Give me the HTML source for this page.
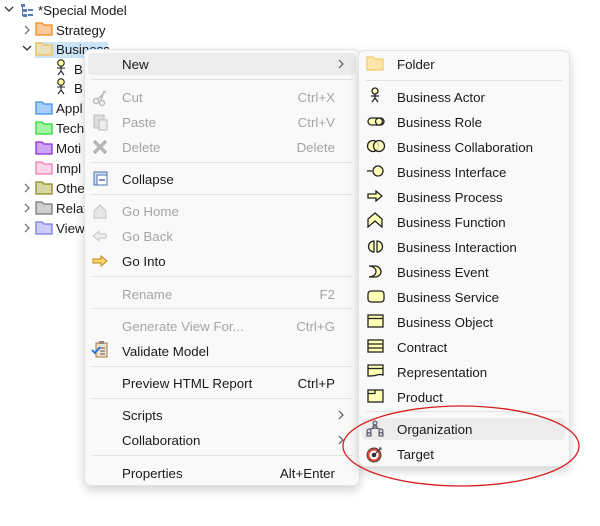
<!DOCTYPE html>
<html><head><meta charset="utf-8"><style>
*{margin:0;padding:0;box-sizing:border-box}
body{width:600px;height:526px;background:#fff;font-family:"Liberation Sans",sans-serif;font-size:13.3px;color:#1a1a1a;position:relative;overflow:hidden}
.a{position:absolute;white-space:nowrap}
.t{line-height:16px;margin-top:1px}
.menu{position:absolute;background:#f9f9f9;border:1px solid #e3e3e3;border-radius:7px;box-shadow:0 4px 10px rgba(0,0,0,0.18)}
.sep{position:absolute;height:1px;background:#e2e2e2}
.dis{color:#a5a5a5}
svg{position:absolute;overflow:visible}
</style></head><body>

<!-- tree -->
<svg style="left:0;top:0" width="120" height="240">
 <g fill="none" stroke="#333" stroke-width="1.3">
  <path d="M5 7l4 4 4-4"/>
  <path d="M25 26l4 4-4 4" stroke="#777"/>
  <path d="M23 46l4 4 4-4"/>
  <path d="M25 184l4 4-4 4" stroke="#777"/>
  <path d="M25 204l4 4-4 4" stroke="#777"/>
  <path d="M25 224l4 4-4 4" stroke="#777"/>
 </g>
 <g fill="#5a7fb5"><rect x="21" y="4" width="4" height="3"/><rect x="23" y="9" width="4" height="3"/><rect x="23" y="14" width="4" height="3"/><rect x="28" y="9" width="5" height="2"/><rect x="28" y="14" width="5" height="2"/><rect x="22" y="6" width="1" height="10"/></g>
</svg>
<div class="a" style="left:35px;top:42px;width:73px;height:16px;background:#cce4f7"></div>
<svg style="left:0;top:0" width="120" height="240">
 <g stroke-width="1.3">
  <path d="M36 23h6l2 2h8v10h-16z" fill="#ffc89a" stroke="#f08a1c"/>
  <path d="M36 43h6l2 2h8v10h-16z" fill="#e8e2b8" stroke="#f0c050"/>
  <path d="M36 102h6l2 2h8v10h-16z" fill="#a8cffa" stroke="#3f8ee0"/>
  <path d="M36 122h6l2 2h8v10h-16z" fill="#a3f5a3" stroke="#2cd42c"/>
  <path d="M36 142h6l2 2h8v10h-16z" fill="#cfa3f5" stroke="#8c2ed8"/>
  <path d="M36 162h6l2 2h8v10h-16z" fill="#ffd3e8" stroke="#f07ab4"/>
  <path d="M36 182h6l2 2h8v10h-16z" fill="#d6d6a0" stroke="#8a8a20"/>
  <path d="M36 202h6l2 2h8v10h-16z" fill="#cfcfcf" stroke="#777"/>
  <path d="M36 222h6l2 2h8v10h-16z" fill="#ccccff" stroke="#7a7ae0"/>
 </g>
 <g stroke="#222" stroke-width="1.1" fill="#ffffa0">
  <circle cx="61" cy="63" r="3.2"/><path d="M61 66v5M57 68h8M61 71l-3 4M61 71l3 4" fill="none"/>
  <circle cx="61" cy="82" r="3.2"/><path d="M61 85v5M57 87h8M61 90l-3 4M61 90l3 4" fill="none"/>
 </g>
</svg>
<div class="a t" style="left:38px;top:2px">*Special Model</div>
<div class="a t" style="left:56px;top:22px">Strategy</div>
<div class="a t" style="left:56px;top:41px">Business</div>
<div class="a t" style="left:74px;top:61px">B</div>
<div class="a t" style="left:74px;top:80px">B</div>
<div class="a t" style="left:56px;top:100px">Appl</div>
<div class="a t" style="left:56px;top:120px">Tech</div>
<div class="a t" style="left:56px;top:140px">Moti</div>
<div class="a t" style="left:56px;top:160px">Impl</div>
<div class="a t" style="left:56px;top:180px">Othe</div>
<div class="a t" style="left:56px;top:200px">Relat</div>
<div class="a t" style="left:56px;top:220px">View</div>

<!-- left menu -->
<div class="menu" style="left:84px;top:49px;width:276px;height:437px"></div>
<div class="a" style="left:88px;top:53px;width:268px;height:22px;background:#ececec;border-radius:4px"></div>
<div class="sep" style="left:91px;top:79px;width:262px"></div>
<div class="sep" style="left:91px;top:162px;width:262px"></div>
<div class="sep" style="left:91px;top:194px;width:262px"></div>
<div class="sep" style="left:91px;top:276px;width:262px"></div>
<div class="sep" style="left:91px;top:308px;width:262px"></div>
<div class="sep" style="left:91px;top:366px;width:262px"></div>
<div class="sep" style="left:91px;top:398px;width:262px"></div>
<div class="sep" style="left:91px;top:455px;width:262px"></div>

<div class="a t" style="left:122px;top:56px">New</div>
<div class="a t dis" style="left:122px;top:89px">Cut</div>
<div class="a t dis" style="left:122px;top:114px">Paste</div>
<div class="a t dis" style="left:122px;top:139px">Delete</div>
<div class="a t" style="left:122px;top:171px">Collapse</div>
<div class="a t dis" style="left:122px;top:203px">Go Home</div>
<div class="a t dis" style="left:122px;top:228px">Go Back</div>
<div class="a t" style="left:122px;top:253px">Go Into</div>
<div class="a t dis" style="left:122px;top:286px">Rename</div>
<div class="a t dis" style="left:122px;top:318px">Generate View For...</div>
<div class="a t" style="left:122px;top:343px">Validate Model</div>
<div class="a t" style="left:122px;top:375px">Preview HTML Report</div>
<div class="a t" style="left:122px;top:407px">Scripts</div>
<div class="a t" style="left:122px;top:432px">Collaboration</div>
<div class="a t" style="left:122px;top:465px">Properties</div>

<div class="a t dis" style="right:265px;top:89px">Ctrl+X</div>
<div class="a t dis" style="right:265px;top:114px">Ctrl+V</div>
<div class="a t dis" style="right:265px;top:139px">Delete</div>
<div class="a t dis" style="right:265px;top:286px">F2</div>
<div class="a t dis" style="right:265px;top:318px">Ctrl+G</div>
<div class="a t" style="right:265px;top:375px">Ctrl+P</div>
<div class="a t" style="right:265px;top:465px">Alt+Enter</div>

<svg style="left:0;top:0" width="600" height="526">
 <g fill="none" stroke="#555" stroke-width="1.2">
  <path d="M339 60l4 4-4 4"/><path d="M339 411l4 4-4 4"/><path d="M339 436l4 4-4 4"/>
 </g>
 <g fill="none" stroke="#bbb" stroke-width="1.5"><circle cx="96" cy="101" r="2.5"/><circle cx="102" cy="103" r="2.5"/><path d="M98 99l8-8M101 100l3-9"/></g>
 <g fill="#ddd" stroke="#bbb"><rect x="94" y="115" width="10" height="13"/><rect x="99" y="120" width="8" height="10" fill="#eee"/></g>
 <path d="M94 141l12 12M106 141l-12 12" stroke="#b5b5b5" stroke-width="3.5"/>
 <rect x="94" y="172" width="13" height="13" fill="#cfe0f5" stroke="#4a73b0"/><rect x="97" y="175" width="10" height="10" fill="#fff" stroke="#4a73b0"/><path d="M99 180h6" stroke="#4a73b0" stroke-width="1.5"/>
 <path d="M94 211l6-6 6 6v7h-12z" fill="#e6e6e6" stroke="#c4c4c4"/>
 <path d="M93 236l6-5v3h7v4h-7v3z" fill="#f0f0f0" stroke="#c4c4c4"/>
 <path d="M107 261l-6-5v3h-8v4h8v3z" fill="#f7d36a" stroke="#c48a1a"/>
 <rect x="96" y="343" width="11" height="14" fill="#f0e3c8" stroke="#a07a40"/><rect x="99" y="341" width="5" height="3" fill="#888"/><path d="M100 348h5M100 351h5M100 354h5" stroke="#557"/><path d="M92 350l3 3 5-6" stroke="#1a6fd8" stroke-width="1.8" fill="none"/>
</svg>

<!-- right menu -->
<div class="menu" style="left:358px;top:50px;width:212px;height:417px"></div>
<div class="sep" style="left:366px;top:80px;width:196px"></div>
<div class="sep" style="left:366px;top:411px;width:196px"></div>
<div class="a" style="left:362px;top:418px;width:203px;height:22px;background:#ececec;border-radius:4px"></div>

<div class="a t" style="left:397px;top:56px">Folder</div>
<div class="a t" style="left:397px;top:89px">Business Actor</div>
<div class="a t" style="left:397px;top:114px">Business Role</div>
<div class="a t" style="left:397px;top:139px">Business Collaboration</div>
<div class="a t" style="left:397px;top:164px">Business Interface</div>
<div class="a t" style="left:397px;top:189px">Business Process</div>
<div class="a t" style="left:397px;top:214px">Business Function</div>
<div class="a t" style="left:397px;top:239px">Business Interaction</div>
<div class="a t" style="left:397px;top:264px">Business Event</div>
<div class="a t" style="left:397px;top:289px">Business Service</div>
<div class="a t" style="left:397px;top:314px">Business Object</div>
<div class="a t" style="left:397px;top:339px">Contract</div>
<div class="a t" style="left:397px;top:364px">Representation</div>
<div class="a t" style="left:397px;top:389px">Product</div>
<div class="a t" style="left:397px;top:421px">Organization</div>
<div class="a t" style="left:397px;top:446px">Target</div>

<svg style="left:0;top:0" width="600" height="526">
 <path d="M367 57h6l2 2h8v11h-16z" fill="#fde4a8" stroke="#f5c04a"/>
 <g stroke="#222" stroke-width="1.3" fill="#ffffb5">
  <circle cx="375" cy="91" r="3"/><path d="M375 94v4M371 96h8M375 98l-3 4M375 98l3 4" fill="none"/>
  <rect x="368" y="118" width="16" height="7" rx="3.5"/><circle cx="379" cy="121.5" r="3.5"/>
  <circle cx="373" cy="146" r="5.5"/><circle cx="379" cy="146" r="5.5" fill="#ffffb5" fill-opacity="0.8"/>
  <path d="M367 171h5" fill="none"/><circle cx="378" cy="171" r="5"/>
  <path d="M368 194h8v-3l6 5-6 5v-3h-8z"/>
  <path d="M368 227v-8l7-6 7 6v8l-7-6z"/>
  <path d="M374 241a5.5 5.5 0 0 0 0 11z"/><path d="M377 241a5.5 5.5 0 0 1 0 11z"/>
  <path d="M369 266h6a6 5.5 0 0 1 0 11h-6a7 5.5 0 0 0 0-11z"/>
  <rect x="368" y="291" width="16" height="11" rx="3"/>
  <rect x="368" y="315" width="15" height="12"/><path d="M368 318.5h15" fill="none"/>
  <rect x="368" y="340" width="15" height="12"/><path d="M368 344h15M368 348h15" fill="none"/>
  <path d="M368 365h15v10q-3-1-6 0t-9 1z"/><path d="M368 368.5h15" fill="none"/>
  <rect x="368" y="390" width="15" height="12"/><path d="M368 393.5h7v-3.5" fill="none"/>
 </g>
 <g stroke="#445" stroke-width="1" fill="#dde">
  <circle cx="375" cy="423" r="2"/><circle cx="369" cy="431" r="2"/><circle cx="381" cy="431" r="2"/>
  <path d="M375 425v3M375 428l-5 1M375 428l5 1" fill="none"/>
  <rect x="367" y="433" width="4" height="3"/><rect x="379" y="433" width="4" height="3"/><rect x="373" y="426" width="4" height="2"/>
 </g>
 <circle cx="374" cy="455" r="7" fill="#d54a3a" stroke="#444"/><circle cx="374" cy="455" r="4.5" fill="#fff"/><circle cx="374" cy="455" r="2.3" fill="#333"/><path d="M374 455l6-6M379 448h2v2" stroke="#333" fill="none"/>
 <ellipse cx="461" cy="446" rx="118" ry="40" fill="none" stroke="#d62020" stroke-width="1.3"/>
</svg>
</body></html>
